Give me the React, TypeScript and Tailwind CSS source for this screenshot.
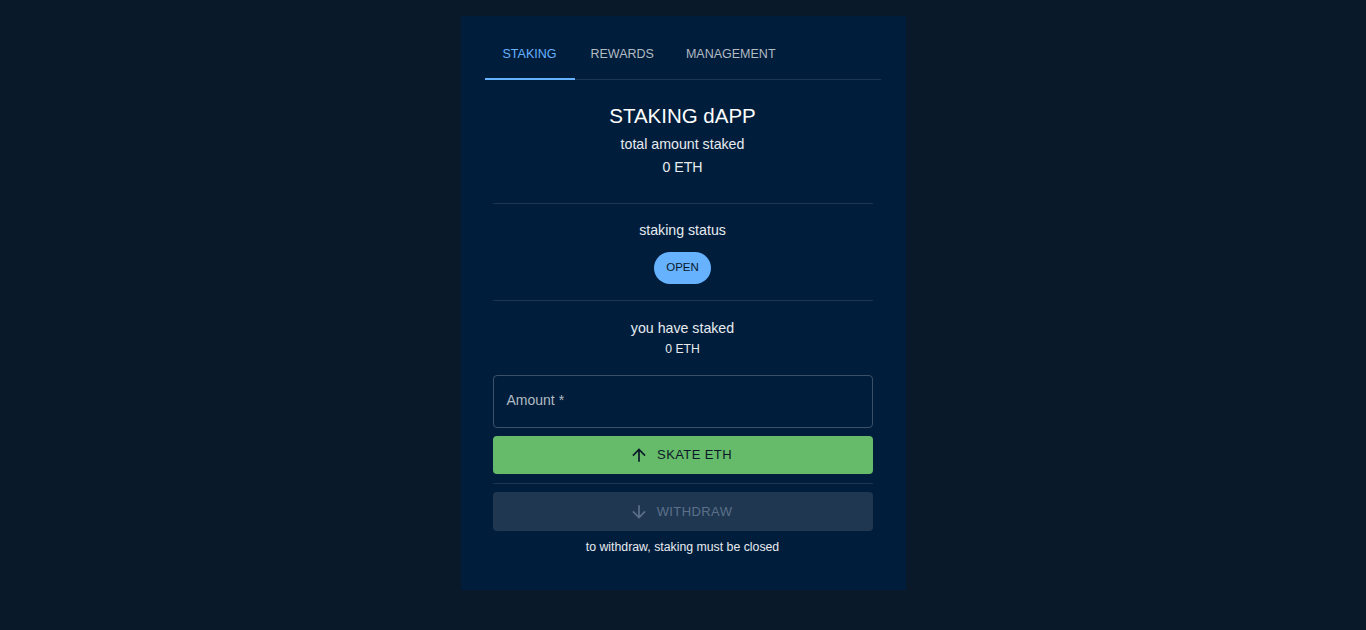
import { useState } from "react";

const tabs = ["STAKING", "REWARDS", "MANAGEMENT"];

export default function App() {
  const [active, setActive] = useState(0);

  return (
    <div className="min-h-[630px] bg-[#0a1929] pt-4 font-['Liberation_Sans',Arial,sans-serif] text-white">
      <div className="mx-auto w-[445px] bg-[#001e3c] pt-[14px] pr-[25px] pb-[34px] pl-6">
        <div className="flex border-b border-[#1c3552]">
          {tabs.map((tab, i) => (
            <button
              key={tab}
              onClick={() => setActive(i)}
              className={`relative flex h-[49px] min-w-[90px] items-center justify-center px-4 pb-px text-[12.5px] ${
                i === active ? "text-[#66b2ff]" : "text-[#b2bac2]"
              }`}
            >
              {tab}
              {i === active && (
                <span className="absolute right-0 -bottom-px left-0 h-[2px] bg-[#66b2ff]" />
              )}
            </button>
          ))}
        </div>

        <div className="px-2 text-center">
          <h1 className="mt-[19px] text-[20.5px] leading-[33px] text-white">
            STAKING dAPP
          </h1>
          <p className="mt-[2px] text-[14.2px] leading-[21px] text-[#e7ebf0]">
            total amount staked
          </p>
          <p className="mt-[2px] text-[14.2px] leading-[21px] text-[#e7ebf0]">
            0 ETH
          </p>

          <Divider className="mt-[25px]" />

          <p className="mt-4 text-[14.2px] leading-[21px] text-[#e7ebf0]">
            staking status
          </p>
          <div className="mt-[11px] flex justify-center">
            <span className="flex h-8 items-center rounded-full bg-[#66b2ff] px-3 text-[11.5px] text-[#0a1929]">
              OPEN
            </span>
          </div>

          <Divider className="mt-4" />

          <p className="mt-[17px] text-[14.2px] leading-[21px] text-[#e7ebf0]">
            you have staked
          </p>
          <p className="mt-px text-[12.2px] leading-[18px] text-[#e7ebf0]">
            0 ETH
          </p>

          <div className="mt-[17px] flex h-[53px] items-center rounded border border-[#3c5068] px-[13px] pb-[3px] text-left text-sm text-[#b2bac2]">
            Amount *
          </div>

          <button className="mt-2 flex h-[38px] w-full items-center justify-center gap-2 rounded bg-[#66bb6a] text-[13px] tracking-[0.4px] text-[#0a1929]">
            <ArrowUp className="-ml-1 h-5 w-5" />
            SKATE ETH
          </button>

          <Divider className="mt-[9px]" />

          <button
            disabled
            className="mt-2 flex h-[39px] w-full items-center justify-center gap-2 rounded bg-[#1f3751] text-[13px] tracking-[0.4px] text-[#5c7189]"
          >
            <ArrowDown className="-ml-1 h-5 w-5" />
            WITHDRAW
          </button>

          <p className="mt-[7px] text-[12.3px] leading-[18px] text-[#e7ebf0]">
            to withdraw, staking must be closed
          </p>
        </div>
      </div>
    </div>
  );
}

function Divider({ className = "" }: { className?: string }) {
  return <div className={`h-px bg-[#1c3552] ${className}`} />;
}

function ArrowUp({ className }: { className?: string }) {
  return (
    <svg viewBox="0 0 24 24" fill="currentColor" className={className}>
      <path d="m4 12 1.41 1.41L11 7.83V20h2V7.83l5.58 5.59L20 12l-8-8-8 8z" />
    </svg>
  );
}

function ArrowDown({ className }: { className?: string }) {
  return (
    <svg viewBox="0 0 24 24" fill="currentColor" className={className}>
      <path d="m20 12-1.41-1.41L13 16.17V4h-2v12.17l-5.58-5.59L4 12l8 8 8-8z" />
    </svg>
  );
}
